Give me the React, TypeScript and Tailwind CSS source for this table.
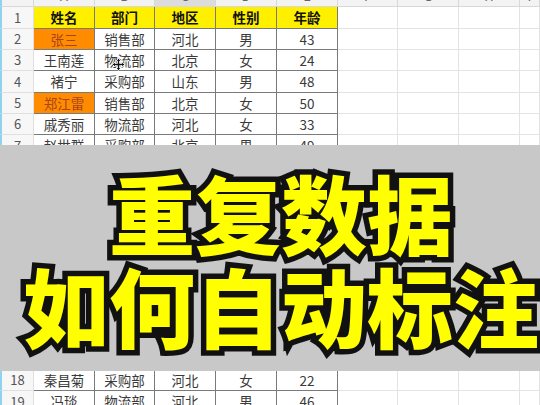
const COLS = ["A", "B", "C", "D", "E", "F", "G", "H", "I"];

type Row = { name: string; dept: string; area: string; sex: string; age: string; mark?: boolean };

const ROWS: Row[] = [
  { name: "张三", dept: "销售部", area: "河北", sex: "男", age: "43", mark: true },
  { name: "王南莲", dept: "物流部", area: "北京", sex: "女", age: "24" },
  { name: "褚宁", dept: "采购部", area: "山东", sex: "男", age: "48" },
  { name: "郑江雷", dept: "销售部", area: "北京", sex: "女", age: "50", mark: true },
  { name: "戚秀丽", dept: "物流部", area: "河北", sex: "女", age: "33" },
  { name: "赵世群", dept: "采购部", area: "北京", sex: "男", age: "49" },
  { name: "张三", dept: "销售部", area: "河北", sex: "男", age: "43", mark: true },
  { name: "孙小梅", dept: "物流部", area: "山东", sex: "女", age: "29" },
  { name: "郑江雷", dept: "销售部", area: "北京", sex: "女", age: "50", mark: true },
  { name: "李建国", dept: "采购部", area: "河北", sex: "男", age: "37" },
  { name: "周敏", dept: "销售部", area: "北京", sex: "女", age: "26" },
  { name: "吴海涛", dept: "物流部", area: "山东", sex: "男", age: "41" },
  { name: "陈静", dept: "采购部", area: "北京", sex: "女", age: "35" },
  { name: "刘志强", dept: "销售部", area: "河北", sex: "男", age: "44" },
  { name: "杨丽", dept: "物流部", area: "北京", sex: "女", age: "31" },
  { name: "黄伟", dept: "采购部", area: "山东", sex: "男", age: "39" },
  { name: "秦昌菊", dept: "采购部", area: "河北", sex: "女", age: "22" },
  { name: "冯琰", dept: "物流部", area: "河北", sex: "男", age: "46" },
];

const grid =
  "grid grid-cols-[34px_61px_60px_61px_61px_61px_60px_61px_61px_1fr] h-[21.33px]";

function DataCell({ children, className = "" }: { children?: React.ReactNode; className?: string }) {
  return (
    <div
      className={`flex items-center justify-center border-r border-b border-[#7a7a7a] text-[13.5px] text-[#3a3a3a] ${className}`}
    >
      {children}
    </div>
  );
}

function EmptyCell() {
  return <div className="border-r border-b border-[#e3e3e3]" />;
}

function RowNum({ n }: { n: number }) {
  return (
    <div className="flex items-center justify-center border-r border-b border-[#e0e0e0] border-l-2 border-l-[#8fd3ee] bg-[#f7f7f7] text-[13px] text-[#555]">
      {n}
    </div>
  );
}

function Cursor() {
  return (
    <svg
      className="absolute left-[112px] top-[58px]"
      width="13"
      height="13"
      viewBox="0 0 13 13"
    >
      <path
        d="M6.5 0.5 L9 3 H7.6 V5.4 H10 V4 L12.5 6.5 L10 9 V7.6 H7.6 V10 H9 L6.5 12.5 L4 10 H5.4 V7.6 H3 V9 L0.5 6.5 L3 4 V5.4 H5.4 V3 H4 Z"
        fill="#111"
        stroke="#fff"
        strokeWidth="0.8"
      />
    </svg>
  );
}

export default function App() {
  return (
    <div className="relative h-[405px] w-[540px] overflow-hidden bg-white font-['Noto_Sans_CJK_SC','Noto_Sans',sans-serif]">
      <div className="-mt-[14px]">
        {/* column letters */}
        <div className={`${grid} bg-[#f3f3f3]`}>
          <div className="border-r border-b border-[#d8d8d8] border-l-2 border-l-[#8fd3ee]" />
          {COLS.map((c) => (
            <div
              key={c}
              className={`flex items-center justify-center border-r border-b border-[#d8d8d8] text-[13px] text-[#666] ${c === "C" ? "bg-[#dcdcdc]" : ""}`}
            >
              {c}
            </div>
          ))}
        </div>

        {/* header row */}
        <div className={grid}>
          <RowNum n={1} />
          {["姓名", "部门", "地区", "性别", "年龄"].map((h) => (
            <DataCell key={h} className="bg-[#fff000] font-bold text-[#111]">
              {h}
            </DataCell>
          ))}
          <EmptyCell />
          <EmptyCell />
          <EmptyCell />
          <EmptyCell />
        </div>

        {ROWS.map((r, i) => (
          <div key={i} className={grid}>
            <RowNum n={i + 2} />
            <DataCell className={r.mark ? "bg-[#ff8c00] text-[#a8431a]" : ""}>{r.name}</DataCell>
            <DataCell>{r.dept}</DataCell>
            <DataCell>{r.area}</DataCell>
            <DataCell>{r.sex}</DataCell>
            <DataCell>{r.age}</DataCell>
            <EmptyCell />
            <EmptyCell />
            <EmptyCell />
            <EmptyCell />
          </div>
        ))}
      </div>

      <Cursor />

      {/* title banner */}
      <div className="absolute left-0 right-0 top-[145px] flex h-[226px] flex-col items-center justify-center bg-[#c8c8c8] pl-[22px]">
        {["重复数据", "如何自动标注"].map((t) => (
          <div
            key={t}
            className="whitespace-nowrap text-[86px] font-black leading-[93px] text-[#ffff00] [-webkit-text-stroke:11px_#111] [paint-order:stroke_fill]"
          >
            {t}
          </div>
        ))}
      </div>
    </div>
  );
}
